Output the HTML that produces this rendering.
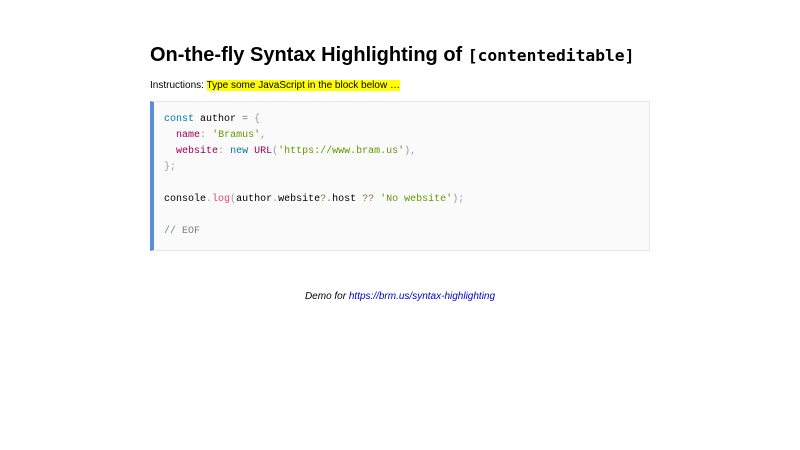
<!DOCTYPE html>
<html><head><style>
body{margin:0;background:#fff;font-family:"Liberation Sans",sans-serif;color:#000}
.w{position:absolute;left:150px;width:500px;top:0}
h1{position:absolute;top:41px;left:0;margin:0;font-size:20px;font-weight:bold;white-space:nowrap;line-height:28px}
h1 code{font-family:"DejaVu Sans Mono","Liberation Mono",monospace;font-size:16.3px;font-weight:bold}
p.i{position:absolute;top:80px;left:0;margin:0;font-size:10px;line-height:12px;white-space:nowrap}
mark{background:#ff0;color:#000}
pre{position:absolute;top:101px;left:0;width:485px;height:132px;margin:0;padding:10px 0 6px 10px;background:#fafafa;border:1px solid #e8e8e8;border-left:4px solid #5b8ed8;font-family:"Liberation Mono",monospace;font-size:10px;line-height:16px;color:#000;box-sizing:content-box}
.k{color:#07a}.p{color:#999}.pr{color:#905}.s{color:#690}.f{color:#DD4A68}.o{color:#9a6e3a}.c{color:slategray}
.d{position:absolute;top:291px;left:0;width:500px;text-align:center;font-size:10px;font-style:italic}
.d a{color:#00c;text-decoration:none}
</style></head><body><div class="w">
<h1>On-the-fly Syntax Highlighting of <code>[contenteditable]</code></h1>
<p class="i">Instructions: <mark>Type some JavaScript in the block below …</mark></p>
<pre><span class="k">const</span> author <span class="o">=</span> <span class="p">{</span>
  <span class="pr">name</span><span class="p">:</span> <span class="s">'Bramus'</span><span class="p">,</span>
  <span class="pr">website</span><span class="p">:</span> <span class="k">new</span> <span class="pr">URL</span><span class="p">(</span><span class="s">'https://www.bram.us'</span><span class="p">),</span>
<span class="p">};</span>

console<span class="p">.</span><span class="f">log</span><span class="p">(</span>author<span class="p">.</span>website<span class="o">?.</span>host <span class="o">??</span> <span class="s">'No website'</span><span class="p">);</span>

<span class="c">// EOF</span></pre>
<div class="d">Demo for <a>https://brm.us/syntax-highlighting</a></div>
</div></body></html>
